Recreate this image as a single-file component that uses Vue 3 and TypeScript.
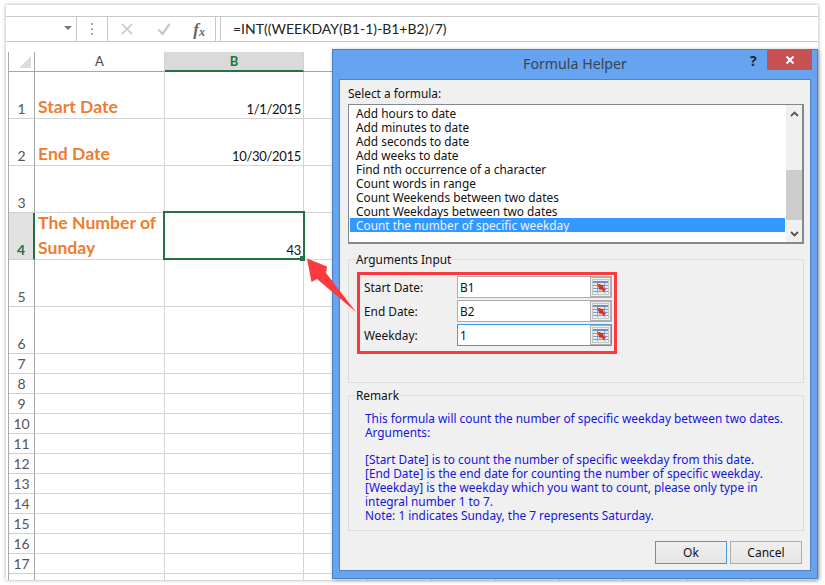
<script setup lang="ts">
interface SheetRow {
  n: number
  h: number
  a?: string
  b?: string
}

const rows: SheetRow[] = [
  { n: 1, h: 47, a: "Start Date", b: "1/1/2015" },
  { n: 2, h: 47, a: "End Date", b: "10/30/2015" },
  { n: 3, h: 47 },
  { n: 4, h: 47, a: "The Number of Sunday", b: "43" },
  { n: 5, h: 47 },
  { n: 6, h: 47 },
  ...[7, 8, 9, 10, 11, 12, 13, 14, 15, 16, 17].map((n) => ({ n, h: 20 })),
  { n: 18, h: 7 },
];

const formulas = [
  "Add hours to date",
  "Add minutes to date",
  "Add seconds to date",
  "Add weeks to date",
  "Find nth occurrence of a character",
  "Count words in range",
  "Count Weekends between two dates",
  "Count Weekdays between two dates",
  "Count the number of specific weekday",
];

const args = [
  { label: "Start Date:", value: "B1", active: false },
  { label: "End Date:", value: "B2", active: false },
  { label: "Weekday:", value: "1", active: true },
];

const remark = [
  "This formula will count the number of specific weekday between two dates.",
  "Arguments:",
  "",
  "[Start Date] is to count the number of specific weekday from this date.",
  "[End Date] is the end date for counting the number of specific weekday.",
  "[Weekday] is the weekday which you want to count, please only type in",
  "integral number 1 to 7.",
  "Note: 1 indicates Sunday, the 7 represents Saturday.",
];

const extraCols = [1, 2, 3, 4, 5, 6, 7, 8];
</script>

<template>
  <div class="page">
    <div class="shot">
      <div class="formula-bar">
        <div class="name-box"><span class="caret"></span></div>
        <div class="dots"><i></i><i></i><i></i></div>
        <div class="fx-box">
          <svg width="14" height="14" viewBox="0 0 14 14">
            <path d="M2 2l10 10M12 2L2 12" stroke="#c6c6c6" stroke-width="1.6" fill="none" />
          </svg>
          <svg width="14" height="14" viewBox="0 0 14 14">
            <path d="M1.5 7.5l4 4.5 7-10" stroke="#c6c6c6" stroke-width="2.2" fill="none" />
          </svg>
          <span class="fx">f<sub>x</sub></span>
        </div>
        <div class="formula">=INT((WEEKDAY(B1-1)-B1+B2)/7)</div>
      </div>

      <div class="sheet">
        <div class="row head-row">
          <div class="row-head corner"><span class="tri"></span></div>
          <div class="col-head col-a">A</div>
          <div class="col-head col-b active">B</div>
          <div v-for="c in extraCols" :key="c" class="col-head col-x"></div>
        </div>
        <div v-for="r in rows" :key="r.n" class="row" :style="{ height: r.h + 'px' }">
          <div class="row-head" :class="{ active: r.n === 4 }">{{ r.n < 18 ? r.n : "" }}</div>
          <div class="cell col-a label"><span>{{ r.a }}</span></div>
          <div class="cell col-b value">
            {{ r.b }}
            <template v-if="r.n === 4">
              <span class="selection"></span>
              <span class="handle"></span>
            </template>
          </div>
          <div v-for="c in extraCols" :key="c" class="cell col-x"></div>
        </div>
      </div>
    </div>

    <div class="dialog">
      <div class="title">
        <span class="title-text">Formula Helper</span>
        <span class="help">?</span>
        <span class="close">
          <svg width="10" height="10" viewBox="0 0 10 10">
            <path d="M1.5 1.5l7 7M8.5 1.5l-7 7" stroke="#fff" stroke-width="2" fill="none" />
          </svg>
        </span>
      </div>
      <div class="body">
        <div class="select-label">Select a formula:</div>
        <div class="listbox">
          <div class="items">
            <div
              v-for="(f, i) in formulas"
              :key="f"
              class="item"
              :class="{ selected: i === formulas.length - 1 }"
            >{{ f }}</div>
          </div>
          <div class="scrollbar">
            <svg width="9" height="6" viewBox="0 0 9 6">
              <path d="M1 5l3.5-3.5L8 5" stroke="#555" stroke-width="1.8" fill="none" />
            </svg>
            <div class="track"><div class="thumb"></div></div>
            <svg width="9" height="6" viewBox="0 0 9 6">
              <path d="M1 1l3.5 3.5L8 1" stroke="#555" stroke-width="1.8" fill="none" />
            </svg>
          </div>
        </div>

        <fieldset class="group args-group">
          <legend>Arguments Input</legend>
          <div class="red-box">
            <div v-for="a in args" :key="a.label" class="arg">
              <label>{{ a.label }}</label>
              <div class="input" :class="{ active: a.active }">
                <span>{{ a.value }}</span>
                <button class="ref-btn" type="button">
                  <svg width="15" height="12" viewBox="0 0 15 12">
                    <rect x="0" y="0" width="15" height="2" fill="#6f8fc4" />
                    <rect x="0" y="2" width="15" height="10" fill="#e3ebf7" />
                    <path d="M0 4.500h15M0 7.500h15M0 10.500h15M4.500 2v10M11.500 2v10" stroke="#7f9fd0" stroke-width="1" />
                    <path d="M4 2.500l7.500 2-1.500 1.500 3 2.500-2.500 2.500-2.500-3L7 10z" fill="#d8361c" />
                  </svg>
                </button>
              </div>
            </div>
          </div>
        </fieldset>

        <fieldset class="group remark-group">
          <legend>Remark</legend>
          <div class="remark">
            <div v-for="(line, i) in remark" :key="i" class="remark-line">{{ line }}</div>
          </div>
        </fieldset>

        <div class="buttons">
          <button class="btn primary" type="button">Ok</button>
          <button class="btn" type="button">Cancel</button>
        </div>
      </div>
    </div>

    <svg class="arrow" width="60" height="64" viewBox="0 0 60 64">
      <path d="M3 2.500l20 8-1 6.500L52 56 13 23l-5.500 3z" fill="#fb3a3f" />
    </svg>
  </div>
</template>

<style scoped>
.page {
  position: relative;
  width: 825px;
  height: 585px;
  padding: 5px 7px 5px 6px;
  box-sizing: border-box;
  background: #fff;
  overflow: hidden;
  font-family: "Noto Sans", sans-serif;
}

.shot {
  height: 575px;
  background: #fff;
  box-shadow: 0 0 4px rgba(0, 0, 0, 0.35);
  overflow: hidden;
}

.formula-bar {
  display: flex;
  align-items: stretch;
  height: 26px;
  margin-top: 11px;
  border-top: 1px solid #c9c9c9;
  border-bottom: 1px solid #c9c9c9;
  box-sizing: border-box;
}

.name-box {
  width: 71px;
  border-right: 1px solid #c9c9c9;
  box-sizing: border-box;
  position: relative;
}

.caret {
  position: absolute;
  right: 4px;
  top: 9px;
  border-left: 4px solid transparent;
  border-right: 4px solid transparent;
  border-top: 4px solid #777;
}

.dots {
  width: 30px;
  display: flex;
  flex-direction: column;
  align-items: center;
  justify-content: center;
  gap: 3px;
}

.dots i {
  width: 2px;
  height: 2px;
  background: #a8a8a8;
}

.fx-box {
  width: 109px;
  border-left: 1px solid #c9c9c9;
  border-right: 1px solid #c9c9c9;
  box-sizing: border-box;
  display: flex;
  align-items: center;
  justify-content: space-between;
  padding: 0 10px 0 12px;
}

.fx {
  font-family: "Liberation Serif", serif;
  font-style: italic;
  font-weight: bold;
  font-size: 17px;
  color: #666;
  line-height: 1;
}

.fx sub {
  font-size: 12px;
  vertical-align: -1px;
}

.formula {
  flex: 1;
  margin-left: 4px;
  padding-left: 12px;
  border-left: 1px solid #c9c9c9;
  font-family: "Lato", sans-serif;
  font-size: 14px;
  line-height: 24px;
  color: #222;
}

.sheet {
  margin-top: 10px;
  margin-left: 2px;
  border-left: 1px solid #a9a9a9;
}

.row {
  display: flex;
}

.head-row {
  height: 20px;
}

.row-head {
  width: 26px;
  flex: none;
  box-sizing: border-box;
  border-right: 1px solid #a6a6a6;
  border-bottom: 1px solid #d0d0d0;
  display: flex;
  align-items: flex-end;
  justify-content: center;
  font-family: "Lato", sans-serif;
  font-size: 14px;
  line-height: 19px;
  color: #555;
}

.row-head.active {
  background: #e1e1e1;
  color: #217346;
  font-weight: bold;
  border-right: 2px solid #217346;
}

.corner {
  position: relative;
  border-bottom: 1px solid #a6a6a6;
}

.tri {
  position: absolute;
  right: 3px;
  bottom: 3px;
  border-left: 12px solid transparent;
  border-bottom: 12px solid #dcdcdc;
}

.col-head {
  flex: none;
  box-sizing: border-box;
  border-right: 1px solid #d0d0d0;
  border-bottom: 1px solid #a6a6a6;
  text-align: center;
  font-family: "Lato", sans-serif;
  font-size: 13px;
  line-height: 19px;
  color: #444;
}

.col-head.active {
  background: #dadada;
  color: #217346;
  font-weight: bold;
  border-bottom: 2px solid #217346;
}

.cell {
  flex: none;
  box-sizing: border-box;
  border-right: 1px solid #d4d4d4;
  border-bottom: 1px solid #d4d4d4;
  position: relative;
}

.col-a {
  width: 130px;
}

.col-b {
  width: 139px;
}

.col-x {
  width: 64px;
}

.label {
  display: flex;
  align-items: flex-end;
  padding: 0 4px 0 3px;
  font-family: "Lato", sans-serif;
  font-weight: bold;
  font-size: 17.6px;
  line-height: 25px;
  color: #ed7d31;
}

.label span {
  margin-bottom: -1px;
}

.value {
  display: flex;
  align-items: flex-end;
  justify-content: flex-end;
  padding: 0 2px 0 0;
  font-family: "Lato", sans-serif;
  font-size: 13px;
  letter-spacing: -0.3px;
  line-height: 17px;
  color: #111;
}

.selection {
  position: absolute;
  left: -2px;
  right: -2px;
  top: -2px;
  bottom: -1px;
  border: 2px solid #217346;
}

.handle {
  position: absolute;
  right: -2px;
  bottom: -2px;
  width: 5px;
  height: 5px;
  background: #217346;
  z-index: 1;
}

.dialog {
  position: absolute;
  left: 332px;
  top: 49px;
  width: 486px;
  height: 530px;
  box-sizing: border-box;
  background: #66a3f1;
  border: 1px solid #4a7fc2;
  display: flex;
  flex-direction: column;
  box-shadow: 1px 1px 4px rgba(0, 0, 0, 0.3);
}

.title {
  height: 29px;
  flex: none;
  position: relative;
  text-align: center;
  font-size: 14.2px;
  line-height: 28px;
  color: #3a4450;
}

.title-text {
  position: relative;
}

.help {
  position: absolute;
  left: 417px;
  top: -3px;
  font-weight: bold;
  font-size: 14px;
  color: #222;
}

.close {
  position: absolute;
  left: 434px;
  top: 0;
  width: 45px;
  height: 20px;
  background: #c75050;
  display: flex;
  align-items: center;
  justify-content: center;
}

.body {
  flex: 1;
  margin: 0 6px 7px;
  background: #f0f0f0;
  border: 1px solid #4f83c4;
  padding: 3px 8px 0;
  display: flex;
  flex-direction: column;
  font-size: 11.85px;
  color: #111;
}

.select-label {
  line-height: 21px;
}

.listbox {
  height: 140px;
  width: 456px;
  flex: none;
  box-sizing: border-box;
  border: 1px solid #828790;
  border-width: 1px 2px 2px 1px;
  background: #fff;
  display: flex;
  padding-left: 1px;
}

.items {
  flex: 1;
  padding-top: 1px;
}

.item {
  height: 14px;
  line-height: 14px;
  padding-left: 6px;
  white-space: nowrap;
}

.item.selected {
  background: #3399ff;
  color: #eaf4ff;
}

.scrollbar {
  width: 16px;
  background: #f0f0f0;
  display: flex;
  flex-direction: column;
  align-items: center;
  padding: 6px 0 5px;
  box-sizing: border-box;
  margin-left: 1px;
}

.track {
  flex: 1;
  width: 100%;
  padding-top: 50px;
  padding-bottom: 8px;
  box-sizing: border-box;
  display: flex;
  margin: 3px 0;
}

.thumb {
  flex: 1;
  background: #cdcdcd;
}

.group {
  width: 456px;
  flex: none;
  box-sizing: border-box;
  margin: 0;
  padding: 0;
  border: 1px solid #dcdcdc;
}

.group legend {
  margin-left: 6px;
  padding: 0 1px;
  line-height: 14px;
}

.args-group {
  height: 131px;
  margin-top: 8px;
}

.red-box {
  width: 260px;
  height: 82px;
  box-sizing: border-box;
  margin: 6px 0 0 8px;
  border: 3px solid #fb3a3f;
  padding: 1px 2px 1px 1px;
  display: flex;
  flex-direction: column;
  gap: 2px;
}

.arg {
  display: flex;
  align-items: center;
  height: 22px;
  flex: none;
}

.arg label {
  width: 96px;
  padding-left: 3px;
  box-sizing: border-box;
  flex: none;
}

.input {
  flex: 1;
  height: 100%;
  box-sizing: border-box;
  border: 1px solid #ababab;
  background: #fff;
  display: flex;
  align-items: center;
  justify-content: space-between;
  padding-left: 2px;
  min-width: 0;
}

.input.active {
  border-color: #4a98dc;
}

.ref-btn {
  width: 21px;
  height: 20px;
  padding: 0;
  box-sizing: border-box;
  border: 1px solid #b0b0b0;
  box-shadow: inset 0 0 0 1px #eeeeee, inset 0 0 0 2px #c4c4c4;
  background: #eeeeee;
  display: flex;
  align-items: center;
  justify-content: center;
}

.remark-group {
  height: 143px;
  margin-top: 5px;
}

.remark {
  padding: 9px 0 0 16px;
  color: #1414e0;
}

.remark-line {
  height: 14px;
  line-height: 14px;
  white-space: nowrap;
}

.remark-line:empty {
  height: 13px;
}

.buttons {
  display: flex;
  justify-content: flex-end;
  gap: 3px;
  margin-top: 10px;
  padding-right: 2px;
  box-sizing: border-box;
  width: 456px;
}

.btn {
  width: 72px;
  height: 23px;
  padding: 0;
  box-sizing: border-box;
  border: 1px solid #adadad;
  background: linear-gradient(#f0f0f0, #e5e5e5);
  font-family: inherit;
  font-size: 12px;
  color: #111;
}

.btn.primary {
  border-color: #4a98dc;
}

.arrow {
  position: absolute;
  left: 304px;
  top: 256px;
}
</style>
